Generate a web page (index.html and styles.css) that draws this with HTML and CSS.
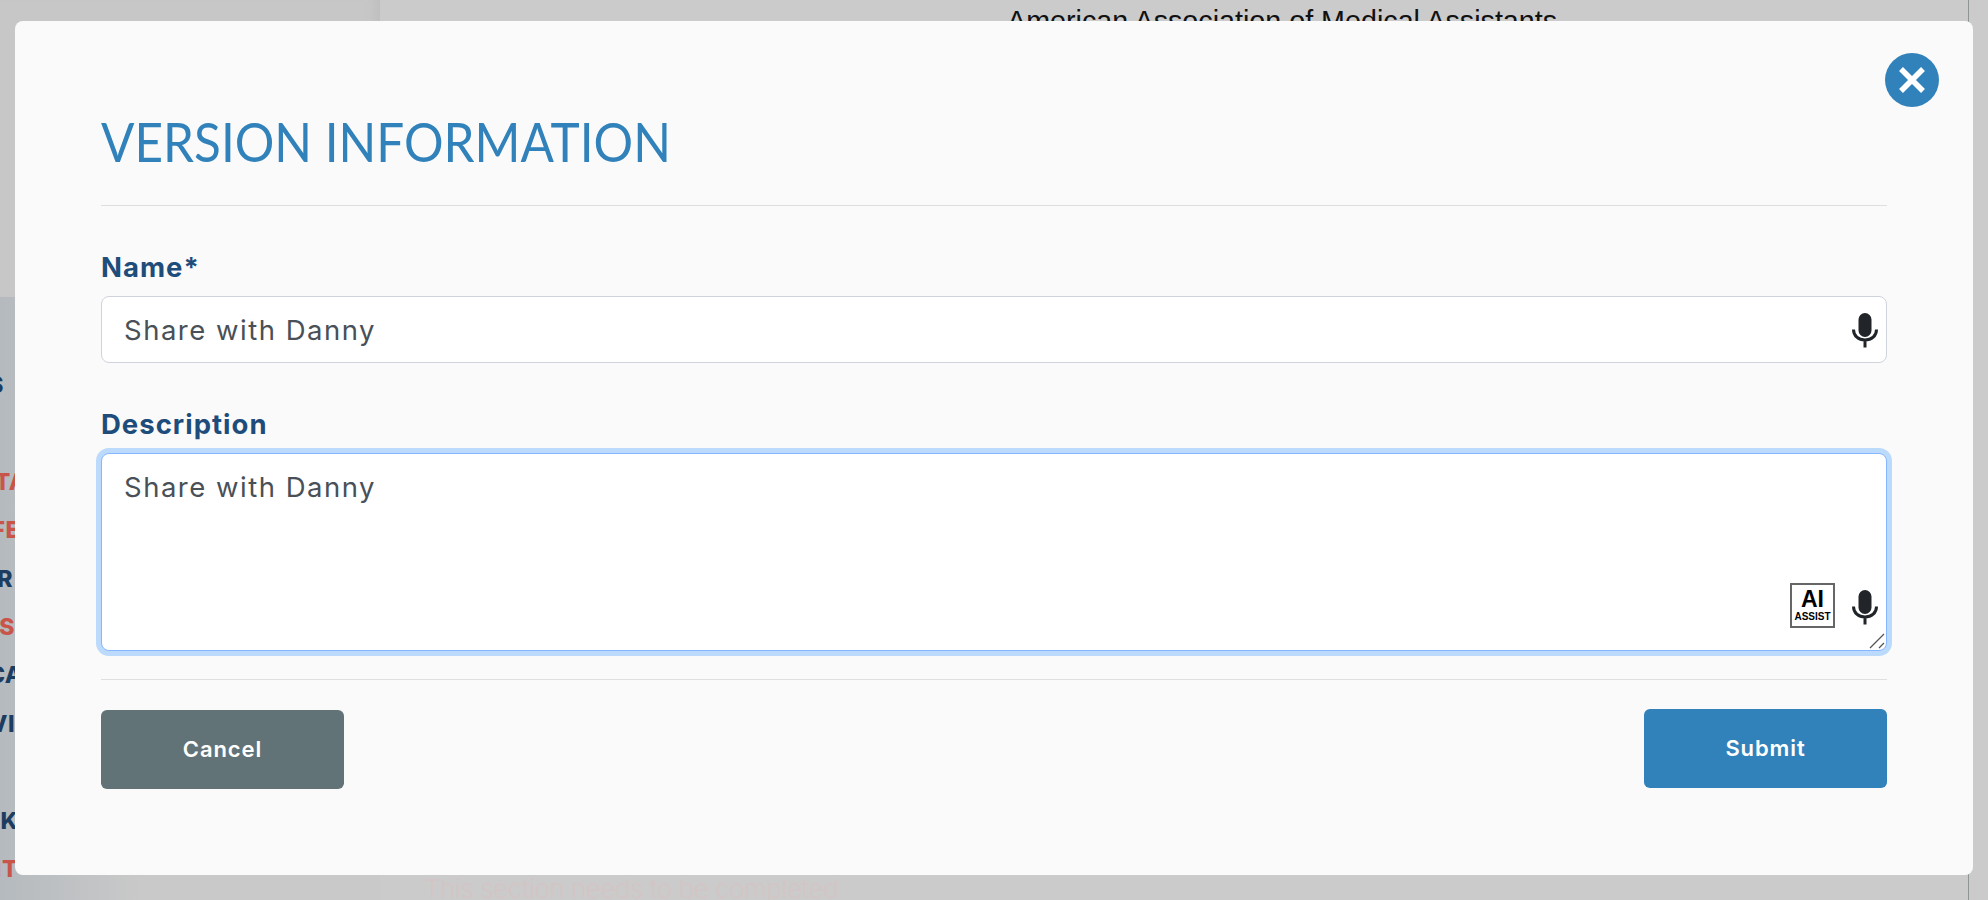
FILE: index.html
```html
<!DOCTYPE html>
<html lang="en">
<head>
  <meta charset="UTF-8">
  <title>Version Information</title>
  <link rel="stylesheet" href="styles.css">
</head>
<body>

<div class="page">
  <aside class="sidebar">
    <div class="sidebar-top"></div>
    <nav class="side-nav">
      <a class="navy end-4">DETAILS</a>
      <a class="gap"></a>
      <a class="red end-27">STATUS STA</a>
      <a class="red end-20">OFFE</a>
      <a class="navy end-13">OR</a>
      <a class="red end-15">SKILLS</a>
      <a class="navy end-23">EDUCA</a>
      <a class="navy end-15">REVI</a>
      <a class="gap"></a>
      <a class="navy end-18">WORK</a>
      <a class="red end-18">UNIT</a>
    </nav>
  </aside>
  <main class="content">
    <h2 class="org">American Association of Medical Assistants</h2>
    <p class="warn">This section needs to be completed</p>
  </main>
</div>

<div class="modal">
  <button class="close" type="button" aria-label="Close">
    <svg viewBox="0 0 54 54" width="54" height="54"><path d="M16 16L38 38M38 16L16 38" stroke="#fff" stroke-width="5.500"/></svg>
  </button>

  <h1><span>VERSION INFORMATION</span></h1>

  <form class="version-form">
    <label for="name">Name*</label>
    <div class="field">
      <input id="name" type="text" value="Share with Danny">
      <svg class="mic" viewBox="0 0 26 36"><path d="M13 1a6.5 6.5 0 0 0-6.5 6.5v11a6.500 6.500 0 0 0 13 0v-11A6.500 6.500 0 0 0 13 1z" fill="#212529"/><path d="M1.500 17.500c0 6.500 5 10.500 11.500 10.500s11.500-4 11.500-10.500M13 28v7.500" fill="none" stroke="#212529" stroke-width="3"/></svg>
    </div>

    <label for="desc">Description</label>
    <div class="field field-area">
      <div class="fake-area" id="desc">Share with Danny</div>
      <div class="ai-badge"><b>AI</b><span>ASSIST</span></div>
      <svg class="mic" viewBox="0 0 26 36"><path d="M13 1a6.5 6.5 0 0 0-6.5 6.5v11a6.500 6.500 0 0 0 13 0v-11A6.500 6.500 0 0 0 13 1z" fill="#212529"/><path d="M1.500 17.500c0 6.500 5 10.500 11.500 10.500s11.500-4 11.500-10.500M13 28v7.500" fill="none" stroke="#212529" stroke-width="3"/></svg>
      <svg class="grip" viewBox="0 0 16 16"><path d="M1 15L15 1M10 15L15 10" stroke="#555" stroke-width="1.300" fill="none"/></svg>
    </div>

    <div class="actions">
      <button type="button" class="btn btn-cancel">Cancel</button>
      <button type="button" class="btn btn-submit">Submit</button>
    </div>
  </form>
</div>

</body>
</html>
```

FILE: styles.css
```css
* {
  box-sizing: border-box;
}
html, body {
  margin: 0;
  height: 100%;
  overflow: hidden;
}
body {
  background: #cbcbcb;
  font-family: Inter, "Noto Sans", sans-serif;
}

/* page behind the modal, dimmed */
.page {
  display: flex;
  height: 900px;
}
.sidebar {
  width: 380px;
  flex: none;
  display: flex;
  flex-direction: column;
  background: linear-gradient(90deg, #b5babe 0, #c9c9c9 140px);
}
.sidebar-top {
  height: 297px;
  background: #c7c7c7;
  box-shadow: inset -14px 0 12px -10px #bdbdbd;
  flex: none;
}
.side-nav {
  width: 15px;
  margin-top: 68px;
  display: flex;
  flex-direction: column;
  align-items: flex-end;
}
.side-nav a {
  height: 48.4px;
  line-height: 40px;
  flex: none;
  font-size: 23px;
  font-weight: 800;
  letter-spacing: 0.5px;
  white-space: nowrap;
}
/* where each clipped label ends, the modal hides the rest */
.end-4 { margin-right: 11px; }
.end-13 { margin-right: 2px; }
.end-15 { margin-right: 0; }
.end-18 { margin-right: -3px; }
.end-20 { margin-right: -5px; }
.end-23 { margin-right: -8px; }
.end-27 { margin-right: -12px; }
.navy {
  color: #1c3d62;
}
.red {
  color: #c9544a;
}
.content {
  flex: 1;
  border-right: 1px solid #8e9595;
  margin-right: 19px;
  overflow: hidden;
}
.org {
  margin: 5px 0 0 627px;
  font-family: "Liberation Sans", Arial, sans-serif;
  font-size: 28.7px;
  line-height: 33px;
  font-weight: 400;
  color: #111;
}
.warn {
  margin: 835px 0 0 44px;
  font-size: 26px;
  line-height: 32px;
  font-weight: 300;
  letter-spacing: -0.5px;
  color: #d3c5c5;
}

.modal {
  position: fixed;
  top: 21px;
  left: 15px;
  width: 1958px;
  height: 854px;
  padding: 0 86px;
  background: #fafafa;
  border-radius: 8px;
}
.close {
  position: absolute;
  top: 32px;
  right: 34px;
  width: 54px;
  height: 54px;
  padding: 0;
  border: none;
  border-radius: 50%;
  background: #3182bb;
}
.close svg {
  display: block;
}
h1 {
  margin: 0;
  height: 185px;
  padding-top: 91px;
  border-bottom: 1px solid #dedfe1;
  font-family: Lato, "Noto Sans", sans-serif;
  font-size: 54px;
  line-height: 60px;
  font-weight: 400;
  color: #3182bb;
}
h1 span {
  display: inline-block;
  transform: scaleX(0.916);
  transform-origin: left;
}
.version-form label {
  display: block;
  margin-top: 43px;
  height: 36px;
  line-height: 36px;
  font-size: 27.5px;
  font-weight: 700;
  letter-spacing: 1px;
  color: #1e4d7b;
}
.field {
  position: relative;
  margin-top: 11px;
}
.field input, .fake-area {
  display: block;
  width: 100%;
  border: 1px solid #cfd3dc;
  border-radius: 8px;
  background: #fff;
  font-family: Inter, "Noto Sans", sans-serif;
  font-size: 27.5px;
  letter-spacing: 1.5px;
  color: #495057;
  outline: none;
}
.field input {
  height: 67px;
  padding: 0 22px;
}
.fake-area {
  height: 198px;
  padding: 15px 22px;
  line-height: 36px;
  border-color: #86b7fe;
  box-shadow: 0 0 0 5px #bcdafc;
}
.mic {
  position: absolute;
  top: 16px;
  right: 9px;
  width: 26px;
  height: 36px;
}
.field-area .mic {
  top: 136px;
}
.ai-badge {
  position: absolute;
  top: 130px;
  right: 52px;
  width: 45px;
  height: 45px;
  border: 2px solid #666;
  background: #fff;
  color: #000;
  display: flex;
  flex-direction: column;
  align-items: center;
  font-family: "Liberation Sans", Arial, sans-serif;
}
.ai-badge b {
  font-size: 23px;
  line-height: 24px;
  margin-top: 2px;
}
.ai-badge span {
  font-size: 10px;
  font-weight: 700;
  line-height: 12px;
}
.grip {
  position: absolute;
  right: 2px;
  bottom: 2px;
  width: 16px;
  height: 16px;
}
.actions {
  display: flex;
  justify-content: space-between;
  align-items: flex-start;
  margin-top: 28px;
  padding-top: 29px;
  border-top: 1px solid #dedfe1;
}
.btn {
  width: 243px;
  height: 79px;
  padding: 0 0 2px;
  border: none;
  border-radius: 6px;
  color: #fff;
  font-family: Inter, "Noto Sans", sans-serif;
  font-size: 22px;
  font-weight: 600;
  letter-spacing: 0.9px;
}
.btn-cancel {
  margin-top: 1px;
  background: #627377;
}
.btn-submit {
  background: #3182bb;
}
```
